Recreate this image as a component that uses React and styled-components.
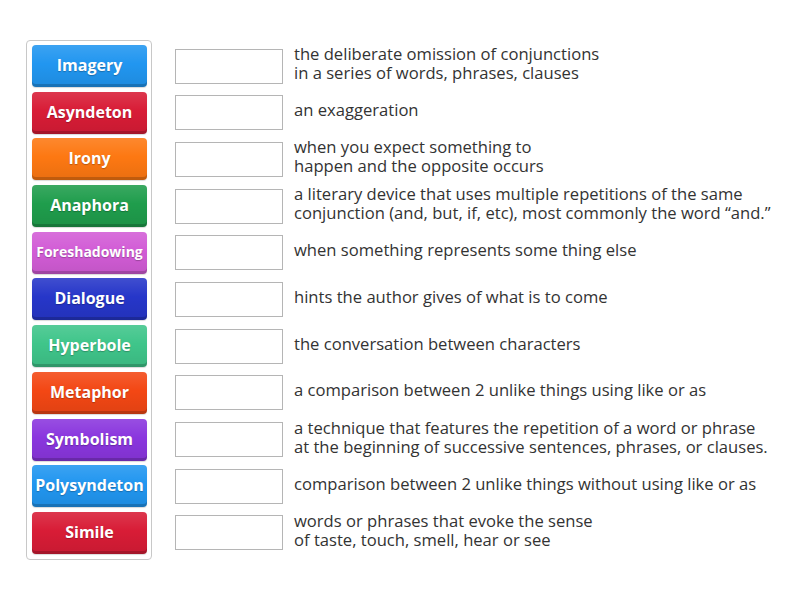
import styled, { createGlobalStyle } from "styled-components";

const GlobalStyle = createGlobalStyle`
  html, body {
    margin: 0;
    padding: 0;
    background: #ffffff;
  }
  body {
    font-family: "Open Sans", "Liberation Sans", sans-serif;
  }
`;

const terms = [
  { label: "Imagery", color: "#2196f0" },
  { label: "Asyndeton", color: "#d81c36" },
  { label: "Irony", color: "#fd7812" },
  { label: "Anaphora", color: "#1f9d4c" },
  { label: "Foreshadowing", color: "#d25cd6", size: 14 },
  { label: "Dialogue", color: "#2636c9" },
  { label: "Hyperbole", color: "#3fc58a" },
  { label: "Metaphor", color: "#f34714" },
  { label: "Symbolism", color: "#8a36de" },
  { label: "Polysyndeton", color: "#2196f0" },
  { label: "Simile", color: "#d81c36" },
];

const definitions = [
  "the deliberate omission of conjunctions\nin a series of words, phrases, clauses",
  "an exaggeration",
  "when you expect something to\nhappen and the opposite occurs",
  "a literary device that uses multiple repetitions of the same\nconjunction (and, but, if, etc), most commonly the word \u201cand.\u201d",
  "when something represents some thing else",
  "hints the author gives of what is to come",
  "the conversation between characters",
  "a comparison between 2 unlike things using like or as",
  "a technique that features the repetition of a word or phrase\nat the beginning of successive sentences, phrases, or clauses.",
  "comparison between 2 unlike things without using like or as",
  "words or phrases that evoke the sense\nof taste, touch, smell, hear or see",
];

export default function App() {
  return (
    <>
      <GlobalStyle />
      <Page>
        <Bank>
          {terms.map((t) => (
            <Tile key={t.label} $color={t.color} $size={t.size}>
              {t.label}
            </Tile>
          ))}
        </Bank>
        <Targets>
          {definitions.map((text, i) => (
            <Row key={i}>
              <Slot />
              <Definition>{text}</Definition>
            </Row>
          ))}
        </Targets>
      </Page>
    </>
  );
}

const Page = styled.div`
  display: flex;
  align-items: flex-start;
  gap: 23px;
  padding: 40px 0 0 26px;
  width: 800px;
  height: 600px;
  box-sizing: border-box;
`;

const Bank = styled.div`
  display: flex;
  flex-direction: column;
  gap: 4.7px;
  padding: 4px 4px 5px 5px;
  border: 1px solid #c8c8c8;
  border-radius: 4px;
`;

const Tile = styled.div`
  width: 115px;
  height: 42px;
  box-sizing: border-box;
  display: flex;
  align-items: center;
  justify-content: center;
  border-radius: 4px;
  background: linear-gradient(
    to bottom,
    rgba(255, 255, 255, 0.12) 0%,
    rgba(255, 255, 255, 0) 45%,
    rgba(0, 0, 0, 0.08) 100%
  ),
  ${(p) => p.$color};
  box-shadow: inset 0 -3px 0 rgba(0, 0, 0, 0.18), 0 1px 1px rgba(0, 0, 0, 0.15);
  color: #ffffff;
  font-family: "Open Sans", "Liberation Sans", sans-serif;
  font-weight: 700;
  font-size: ${(p) => p.$size || 16}px;
  text-shadow: 0 1px 1px rgba(0, 0, 0, 0.25);
  white-space: nowrap;
  padding-bottom: 2px;
`;

const Targets = styled.div`
  display: flex;
  flex-direction: column;
  gap: 4.7px;
  padding-top: 5px;
`;

const Row = styled.div`
  height: 42px;
  display: flex;
  align-items: center;
  gap: 11px;
`;

const Slot = styled.div`
  width: 108px;
  height: 35px;
  flex-shrink: 0;
  box-sizing: border-box;
  border: 1px solid #b5b5b5;
  background: #ffffff;
`;

const Definition = styled.div`
  margin-top: -6px;
  font-size: 16.6px;
  line-height: 19px;
  color: #333333;
  white-space: pre;
`;
